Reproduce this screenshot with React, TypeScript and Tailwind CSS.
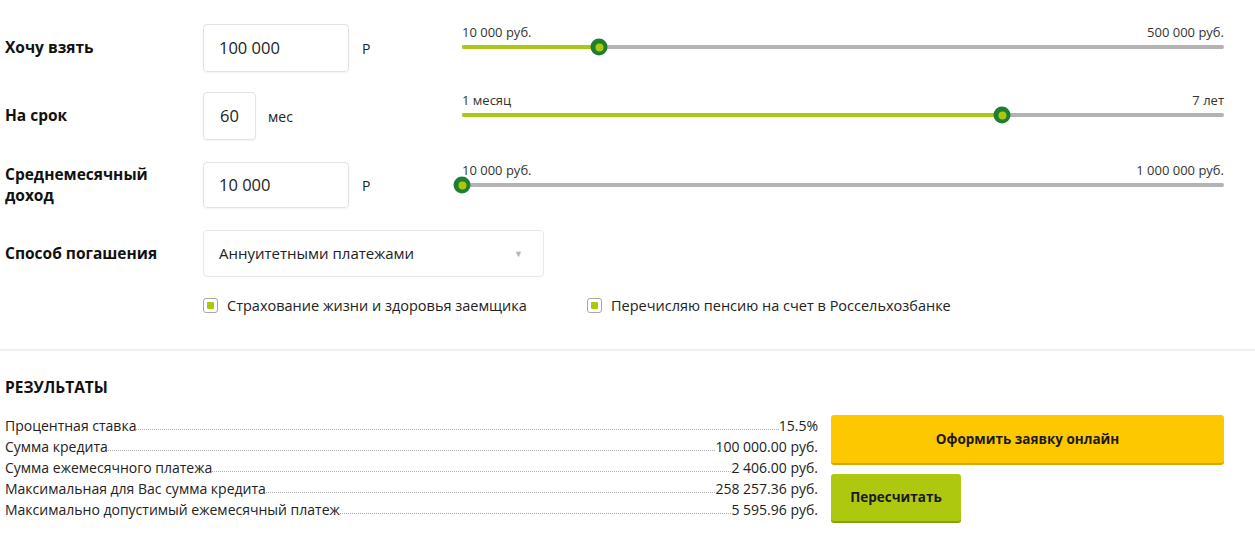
import React from "react"

const font = { fontFamily: "'Open Sans', Lato, Arial, sans-serif" }

interface SliderProps {
  min: string
  max: string
  pos: number
}

function Slider({ min, max, pos }: SliderProps) {
  return (
    <div className="flex-1 self-start">
      <div className="flex h-4 items-center justify-between text-[13px] leading-4 text-[#333]">
        <span>{min}</span>
        <span>{max}</span>
      </div>
      <div className="relative mt-[5px] h-[4px] rounded-full bg-[#b3b3b3]">
        <div className="absolute left-0 top-0 h-[4px] rounded-full bg-[#a9c814]" style={{ width: `${pos}%` }} />
        <div
          className="absolute top-1/2 flex h-[17px] w-[17px] -translate-x-1/2 -translate-y-1/2 items-center justify-center rounded-full bg-[#1f7f2e]"
          style={{ left: `${pos}%` }}
        >
          <div className="h-[8px] w-[8px] rounded-full bg-[#a9c814]" />
        </div>
      </div>
    </div>
  )
}

function Checkbox({ label }: { label: string }) {
  return (
    <label className="flex items-center gap-[9px] text-[14.5px] text-[#222]">
      <span className="flex h-[15px] w-[15px] items-center justify-center rounded-[3px] border border-[#a8a8a8] bg-white">
        <span className="h-[7px] w-[7px] rounded-[1px] bg-[#a9c814]" />
      </span>
      {label}
    </label>
  )
}

function ResultRow({ label, value }: { label: string; value: string }) {
  return (
    <div className="flex h-[21px] items-end text-[14px] leading-[18px] text-[#222]">
      <span>{label}</span>
      <span className="mb-[5px] flex-1 border-b border-dotted border-[#b0b0b0]" />
      <span>{value}</span>
    </div>
  )
}

export default function App() {
  return (
    <div className="min-h-[541px] bg-white" style={font}>
      {/* Calculator form */}
      <div className="pl-[5px] pr-[31px] pt-[24px]">
        <div className="flex h-[48px] items-center">
          <div className="w-[198px] text-[15.5px] font-bold text-[#111]">Хочу взять</div>
          <div className="flex w-[259px] items-center">
            <div className="flex h-[48px] w-[146px] items-center rounded-[4px] border border-[#e3e3e3] px-[15px] text-[16.5px] text-[#222] shadow-[0_1px_2px_rgba(0,0,0,0.05)]">
              100 000
            </div>
            <span className="ml-[13px] text-[14px] text-[#222]">Р</span>
          </div>
          <Slider min="10 000 руб." max="500 000 руб." pos={18} />
        </div>

        <div className="mt-[20px] flex h-[48px] items-center">
          <div className="w-[198px] text-[15.5px] font-bold text-[#111]">На срок</div>
          <div className="flex w-[259px] items-center">
            <div className="flex h-[48px] w-[53px] items-center justify-center rounded-[4px] border border-[#e3e3e3] text-[16.5px] text-[#222] shadow-[0_1px_2px_rgba(0,0,0,0.05)]">
              60
            </div>
            <span className="ml-[12px] text-[14px] text-[#222]">мес</span>
          </div>
          <Slider min="1 месяц" max="7 лет" pos={70.9} />
        </div>

        <div className="mt-[22px] flex h-[46px] items-center">
          <div className="w-[198px] text-[15.5px] font-bold leading-[21px] text-[#111]">
            Среднемесячный
            <br />
            доход
          </div>
          <div className="flex w-[259px] items-center">
            <div className="flex h-[46px] w-[146px] items-center rounded-[4px] border border-[#e3e3e3] px-[15px] text-[16.5px] text-[#222] shadow-[0_1px_2px_rgba(0,0,0,0.05)]">
              10 000
            </div>
            <span className="ml-[13px] text-[14px] text-[#222]">Р</span>
          </div>
          <Slider min="10 000 руб." max="1 000 000 руб." pos={0} />
        </div>

        <div className="mt-[22px] flex h-[47px] items-center">
          <div className="w-[198px] text-[15.5px] font-bold text-[#111]">Способ погашения</div>
          <div className="flex h-[47px] w-[341px] items-center justify-between rounded-[4px] border border-[#e8e8e8] pl-[15px] pr-[20px] text-[15px] text-[#222]">
            <span>Аннуитетными платежами</span>
            <span className="text-[9px] text-[#b5b5b5]">▼</span>
          </div>
        </div>

        <div className="ml-[198px] mt-[18px] flex items-center">
          <div className="w-[384px]">
            <Checkbox label="Страхование жизни и здоровья заемщика" />
          </div>
          <Checkbox label="Перечисляю пенсию на счет в Россельхозбанке" />
        </div>
      </div>

      <div className="mt-[32px] h-[2px] bg-[#f0f0f0]" />

      {/* Results */}
      <div className="pl-[5px] pr-[31px] pt-[25px]">
        <div className="text-[15.5px] font-bold uppercase text-[#111]">Результаты</div>
        <div className="mt-[15px] flex gap-[13px]">
          <div className="w-[813px]">
            <ResultRow label="Процентная ставка" value="15.5%" />
            <ResultRow label="Сумма кредита" value="100 000.00 руб." />
            <ResultRow label="Сумма ежемесячного платежа" value="2 406.00 руб." />
            <ResultRow label="Максимальная для Вас сумма кредита" value="258 257.36 руб." />
            <ResultRow label="Максимально допустимый ежемесячный платеж" value="5 595.96 руб." />
          </div>
          <div className="flex flex-1 flex-col items-start gap-[11px] pt-[1px]">
            <button className="h-[48px] w-full rounded-[3px] bg-[#fec800] text-[13.5px] font-bold text-[#1a1a1a] shadow-[0_2px_0_#d9a900]">
              Оформить заявку онлайн
            </button>
            <button className="h-[47px] w-[130px] rounded-[3px] bg-[#adc80e] text-[13.5px] font-bold text-[#1a1a1a] shadow-[0_2px_0_#86a00a]">
              Пересчитать
            </button>
          </div>
        </div>
      </div>
    </div>
  )
}
